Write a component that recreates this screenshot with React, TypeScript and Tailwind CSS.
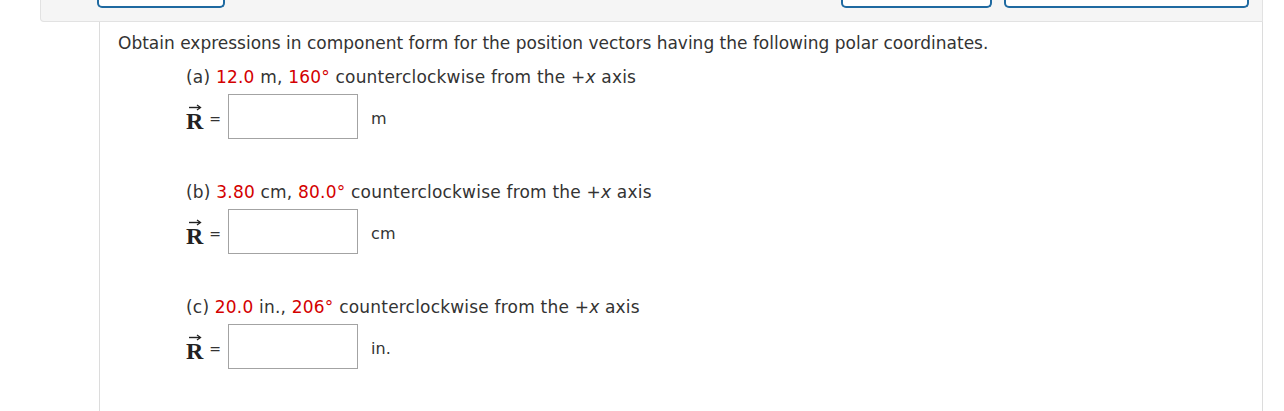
import React from 'react';

const Red: React.FC<{ children: React.ReactNode }> = ({ children }) => (
  <span className="text-[#d40000]">{children}</span>
);

const VecR: React.FC = () => (
  <span className="inline-flex flex-col items-center leading-none">
    <svg width="14" height="7" viewBox="0 0 14 7" className="mb-[1px]">
      <path d="M1 3.5 H12" stroke="#222" strokeWidth="1.4" fill="none" />
      <path d="M9 1 L12.5 3.5 L9 6" stroke="#222" strokeWidth="1.3" fill="none" />
    </svg>
    <span className="font-['Liberation_Serif',serif] font-bold text-[24px] text-[#222] leading-[18px]">R</span>
  </span>
);

const parts = [
  { label: '(a)', mag: '12.0', unitText: ' m, ', ang: '160°', unit: 'm' },
  { label: '(b)', mag: '3.80', unitText: ' cm, ', ang: '80.0°', unit: 'cm' },
  { label: '(c)', mag: '20.0', unitText: ' in., ', ang: '206°', unit: 'in.' },
];

export default function App() {
  return (
    <div className="w-full h-[411px] bg-white overflow-hidden font-['DejaVu_Sans',sans-serif] text-[#333]">
      <div className="ml-[40px] w-[1223px] h-[22px] bg-[#f5f5f5] border-x border-b border-[#e2e2e2] rounded-bl-[4px] flex items-start">
        <div className="ml-[56px] w-[128px] h-[8px] border-x-2 border-b-2 border-[#1f6aa1] rounded-b-[5px] bg-white" />
        <div className="ml-[616px] w-[151px] h-[8px] border-x-2 border-b-2 border-[#1f6aa1] rounded-b-[5px] bg-white" />
        <div className="ml-[12px] w-[245px] h-[8px] border-x-2 border-b-2 border-[#1f6aa1] rounded-b-[5px] bg-white" />
      </div>
      <div className="ml-[99px] w-[1164px] h-[389px] border-x border-[#dcdcdc] pl-[18px] pt-[9px]">
        <p className="text-[17px] leading-[24px]">
          Obtain expressions in component form for the position vectors having the following polar coordinates.
        </p>
        {parts.map((p, i) => (
          <div key={p.label} className={i === 0 ? 'ml-[68px] mt-[10px]' : 'ml-[68px] mt-[41px]'}>
            <p className="text-[17px] leading-[24px] tracking-[0.2px]">
              {p.label} <Red>{p.mag}</Red>
              {p.unitText}
              <Red>{p.ang}</Red> counterclockwise from the +<i>x</i> axis
            </p>
            <div className="mt-[5px] flex items-center">
              <VecR />
              <span className="ml-[6px] text-[14px] mt-[6px]">=</span>
              <div className="ml-[7px] w-[130px] h-[45px] border border-[#a3a3a3] bg-white" />
              <span className="ml-[13px] text-[16px] mt-[5px]">{p.unit}</span>
            </div>
          </div>
        ))}
      </div>
    </div>
  );
}
